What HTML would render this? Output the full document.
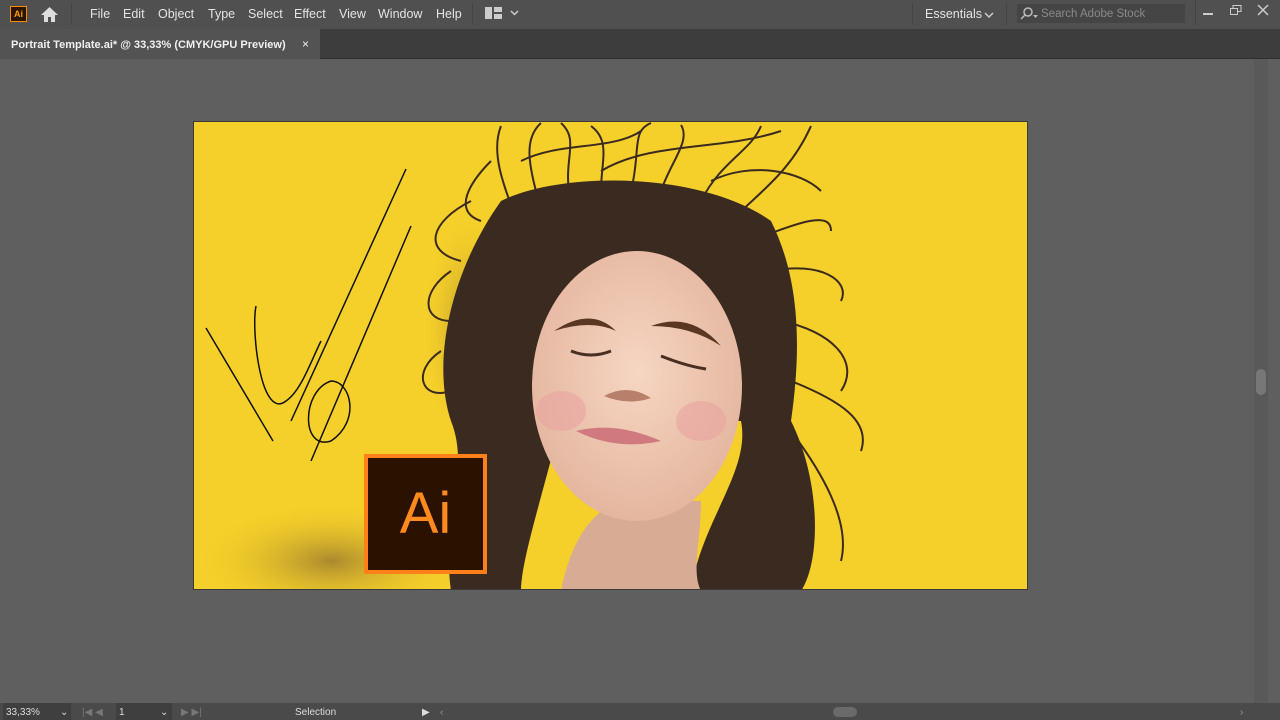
<!DOCTYPE html>
<html><head><meta charset="utf-8"><style>
*{margin:0;padding:0;box-sizing:border-box}
body{width:1280px;height:720px;overflow:hidden;background:#5f5f5f;font-family:"Liberation Sans",sans-serif;position:relative}
.top{position:absolute;left:0;top:0;width:1280px;height:29px;background:#505050;color:#e4e4e4;font-size:12.5px}
.top span{position:absolute;top:7px}
.tabs{position:absolute;left:0;top:29px;width:1280px;height:30px;background:#3d3d3d;border-bottom:1px solid #2e2e2e}
.tab{position:absolute;left:0;top:0;width:320px;height:30px;background:#535353;color:#f0f0f0;font-size:11px;font-weight:bold;padding:10px 0 0 11px}
.status{position:absolute;left:0;top:703px;width:1280px;height:17px;background:#4a4a4a;color:#ddd;font-size:10px}
.status span{position:absolute;top:4px}
.vs{position:absolute;left:1254px;top:59px;width:14px;height:644px;background:#595959}
.ab{position:absolute;left:193px;top:121px;width:835px;height:469px;background:#f5d02a;overflow:hidden;border:1px solid #3a3a3a}
</style></head><body>
<div class="top">
<div style="position:absolute;left:10px;top:6px;width:17px;height:16px;background:#2b1400;border:1px solid #ff8a00;color:#ff9a00;font-size:9px;font-weight:bold;text-align:center;line-height:14px">Ai</div>
<svg style="position:absolute;left:40px;top:6px" width="19" height="17"><path d="M9.5 1L1 9h3v7h4v-5h3v5h4V9h3z" fill="#ddd"/></svg>
<div style="position:absolute;left:71px;top:4px;width:1px;height:21px;background:#444"></div>
<span style="left:90px">File</span><span style="left:123px">Edit</span><span style="left:158px">Object</span><span style="left:208px">Type</span><span style="left:248px">Select</span><span style="left:294px">Effect</span><span style="left:339px">View</span><span style="left:378px">Window</span><span style="left:436px">Help</span>
<div style="position:absolute;left:472px;top:4px;width:1px;height:21px;background:#444"></div>
<svg style="position:absolute;left:485px;top:7px" width="35" height="13"><rect x="0" y="0" width="7" height="12" fill="#ccc"/><rect x="9" y="0" width="8" height="5" fill="#ccc"/><rect x="9" y="7" width="8" height="5" fill="#ccc"/><path d="M26 4l3.5 3.5L33 4" stroke="#ccc" fill="none" stroke-width="1.5"/></svg>
<div style="position:absolute;left:912px;top:4px;width:1px;height:21px;background:#444"></div>
<span style="left:925px">Essentials</span>
<svg style="position:absolute;left:984px;top:11px" width="10" height="8"><path d="M1 2l4 4 4-4" stroke="#ccc" fill="none" stroke-width="1.5"/></svg>
<div style="position:absolute;left:1006px;top:4px;width:1px;height:21px;background:#444"></div>
<div style="position:absolute;left:1017px;top:4px;width:168px;height:19px;background:#454545;color:#8a8a8a;font-size:11.5px;padding:4px 0 0 24px">Search Adobe Stock</div>
<svg style="position:absolute;left:1020px;top:7px" width="20" height="13"><circle cx="8" cy="5" r="4" stroke="#bbb" fill="none" stroke-width="1.5"/><path d="M5 8l-4 4" stroke="#bbb" stroke-width="1.5"/><path d="M13 8h5l-2.5 3z" fill="#bbb"/></svg>
<div style="position:absolute;left:1195px;top:0;width:1px;height:25px;background:#444"></div>
<div style="position:absolute;left:1203px;top:13px;width:10px;height:2px;background:#ccc"></div>
<svg style="position:absolute;left:1230px;top:5px" width="12" height="11"><rect x="3" y="0.5" width="8" height="6" stroke="#ccc" fill="none"/><rect x="0.5" y="3.5" width="7" height="6" stroke="#ccc" fill="#505050"/></svg>
<svg style="position:absolute;left:1257px;top:4px" width="12" height="12"><path d="M1 1l10 10M11 1L1 11" stroke="#ccc" stroke-width="1.5"/></svg>
</div>
<div class="tabs"><div class="tab">Portrait Template.ai* @ 33,33% (CMYK/GPU Preview)<span style="position:absolute;left:302px;top:8px;font-weight:normal;font-size:12px">×</span></div></div>
<div class="vs"><div style="position:absolute;left:2px;top:310px;width:10px;height:26px;background:#777;border-radius:5px"></div></div>
<div class="ab">
<svg width="835" height="469" viewBox="193 121 835 469">
<defs><radialGradient id="sh" cx="0.5" cy="0.5" r="0.5"><stop offset="0" stop-color="#8a6a30" stop-opacity="0.7"/><stop offset="1" stop-color="#f5d02a" stop-opacity="0"/></radialGradient>
<radialGradient id="fc" cx="0.5" cy="0.45" r="0.6"><stop offset="0" stop-color="#f6d6c2"/><stop offset="1" stop-color="#e3b39c"/></radialGradient></defs>
<ellipse cx="330" cy="560" rx="140" ry="60" fill="url(#sh)"/>
<ellipse cx="470" cy="330" rx="50" ry="120" fill="url(#sh)"/>
<path d="M500 200 C560 170 700 170 770 220 C800 280 800 350 790 420 C820 480 820 560 800 590 L690 590 C700 520 750 470 740 420 L560 420 C540 500 520 560 520 590 L450 590 C440 520 470 470 450 420 C430 360 450 270 500 200 Z" fill="#3b2a20"/>
<g stroke="#3b2a20" stroke-width="2" fill="none">
<path d="M520 230 C500 180 490 150 500 125"/><path d="M540 210 C530 170 520 140 540 122"/><path d="M570 200 C560 160 580 140 560 122"/><path d="M600 190 C600 160 610 140 590 125"/><path d="M630 190 C640 150 630 130 650 122"/><path d="M660 190 C670 160 690 140 680 124"/><path d="M700 200 C720 160 750 150 760 125"/><path d="M730 220 C760 190 790 170 810 125"/><path d="M750 240 C800 220 830 210 830 230"/><path d="M770 270 C820 260 850 280 840 300"/><path d="M780 320 C830 330 860 360 840 390"/><path d="M790 380 C840 400 870 420 860 450"/><path d="M790 430 C820 470 850 520 840 560"/><path d="M480 220 C450 210 470 180 490 160"/><path d="M460 260 C420 250 430 220 470 200"/><path d="M450 320 C420 320 420 290 450 270"/><path d="M450 390 C420 400 410 370 440 350"/>
<path d="M520 160 C560 140 610 150 640 130"/><path d="M600 170 C650 140 720 150 780 130"/><path d="M710 180 C750 160 800 170 820 190"/>
</g>
<path d="M560 590 C570 540 590 510 620 500 L700 500 C700 540 690 570 700 590 Z" fill="#d8ab94"/>
<ellipse cx="636" cy="385" rx="105" ry="135" fill="url(#fc)"/>
<path d="M553 330 Q590 305 615 330 Q590 318 553 330Z" fill="#5a3722"/>
<path d="M650 325 Q690 310 720 345 Q690 325 650 325Z" fill="#5a3722"/>
<path d="M570 350 Q590 358 610 350" stroke="#4a2e20" stroke-width="3" fill="none"/>
<path d="M660 355 Q685 365 705 368" stroke="#4a2e20" stroke-width="3" fill="none"/>
<ellipse cx="560" cy="410" rx="25" ry="20" fill="#eaa3a0" opacity="0.6"/>
<ellipse cx="700" cy="420" rx="25" ry="20" fill="#eaa3a0" opacity="0.6"/>
<path d="M603 395 Q627 382 650 397 Q627 405 603 395Z" fill="#b8806b"/>
<path d="M575 430 Q615 420 660 440 Q615 450 575 430Z" fill="#d07a80"/>
<path d="M205 327 L272 440 M255 305 C250 330 260 420 285 400 C300 390 310 360 320 340 M405 168 L290 420 M410 225 L310 460 M330 380 C300 390 300 450 330 440 C360 420 350 380 330 380" stroke="#111" stroke-width="1.5" fill="none"/>
</svg>
<div style="position:absolute;left:170px;top:332px;width:123px;height:120px;background:#2b1100;border:4px solid #ff7f18;color:#ff8a1e;font-size:58px;text-align:center;line-height:112px">Ai</div>
</div>
<div class="status">
<div style="position:absolute;left:3px;top:0;width:68px;height:17px;background:#3f3f3f"></div>
<span style="left:6px">33,33%</span><span style="left:60px">⌄</span>
<span style="left:82px;color:#777">|◀ ◀</span>
<div style="position:absolute;left:116px;top:0;width:56px;height:17px;background:#3f3f3f"></div>
<span style="left:119px">1</span><span style="left:160px">⌄</span>
<span style="left:181px;color:#777">▶ ▶|</span>
<span style="left:295px">Selection</span>
<span style="left:422px">▶</span><span style="left:440px;color:#999">‹</span>
<div style="position:absolute;left:833px;top:4px;width:24px;height:10px;background:#6a6a6a;border-radius:5px"></div>
<span style="left:1240px;color:#999">›</span>
</div>
</body></html>
